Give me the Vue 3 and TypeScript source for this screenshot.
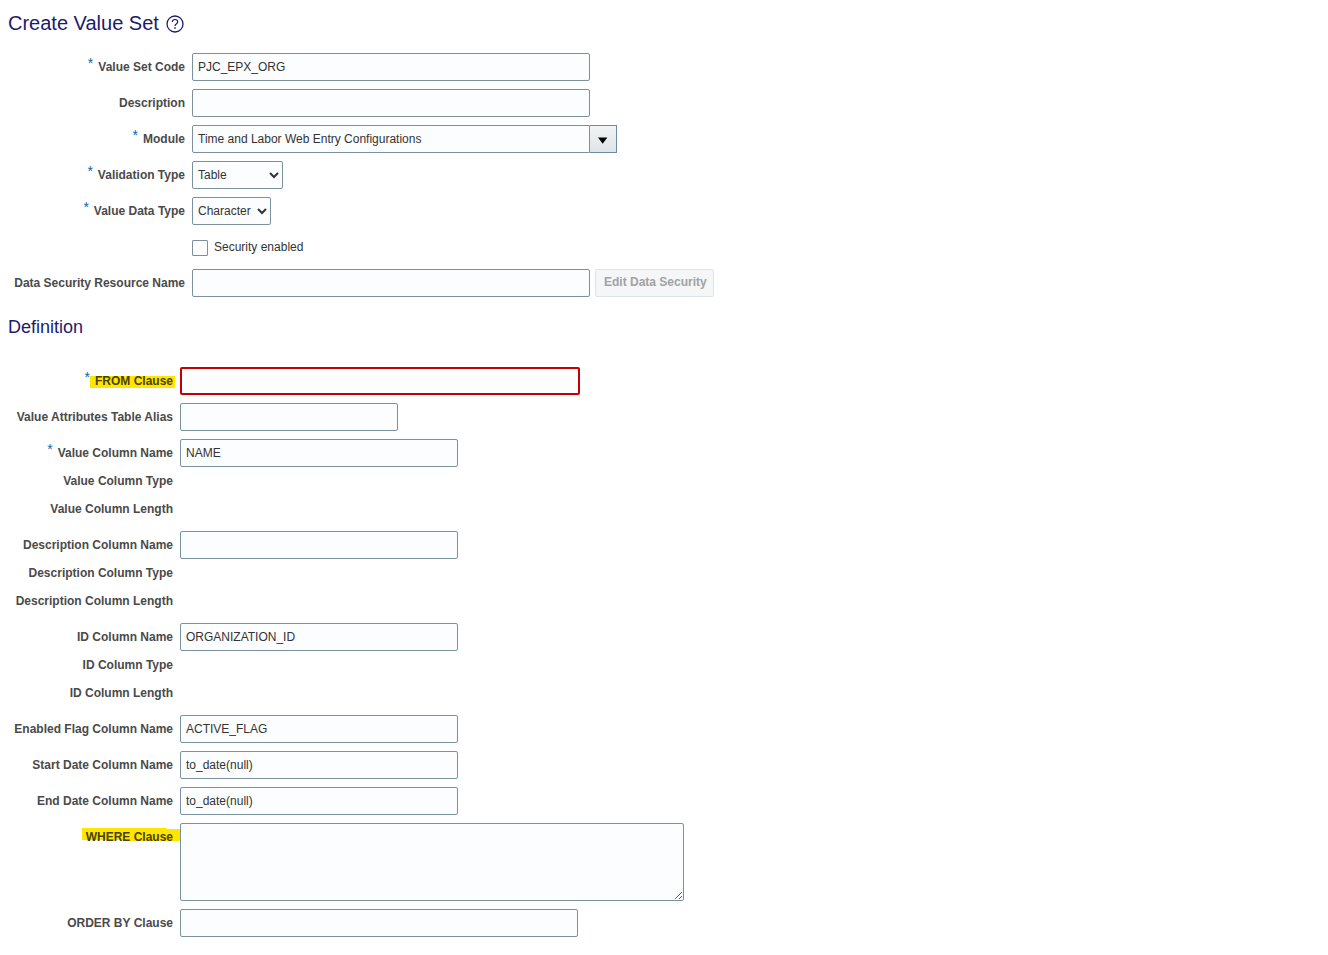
<script setup lang="ts">
import { ref } from 'vue'

type Kind = 'text' | 'combo' | 'select' | 'check' | 'readonly' | 'area'

interface Field {
  id: string
  label: string
  kind: Kind
  value?: string
  size?: 'small' | 'medium' | 'large' | 'type' | 'data'
  required?: boolean
  invalid?: boolean
  mark?: 'from' | 'where'
  action?: string
}

const general = ref<Field[]>([
  { id: 'code', label: 'Value Set Code', kind: 'text', value: 'PJC_EPX_ORG', size: 'large', required: true },
  { id: 'description', label: 'Description', kind: 'text', value: '', size: 'large' },
  { id: 'module', label: 'Module', kind: 'combo', value: 'Time and Labor Web Entry Configurations', size: 'large', required: true },
  { id: 'validation', label: 'Validation Type', kind: 'select', value: 'Table', size: 'type', required: true },
  { id: 'datatype', label: 'Value Data Type', kind: 'select', value: 'Character', size: 'data', required: true },
  { id: 'security', label: 'Security enabled', kind: 'check' },
  { id: 'resource', label: 'Data Security Resource Name', kind: 'text', value: '', size: 'large', action: 'Edit Data Security' },
])

const definition = ref<Field[]>([
  { id: 'from', label: 'FROM Clause', kind: 'text', value: '', size: 'large', required: true, invalid: true, mark: 'from' },
  { id: 'alias', label: 'Value Attributes Table Alias', kind: 'text', value: '', size: 'small' },
  { id: 'value-name', label: 'Value Column Name', kind: 'text', value: 'NAME', size: 'medium', required: true },
  { id: 'value-type', label: 'Value Column Type', kind: 'readonly' },
  { id: 'value-length', label: 'Value Column Length', kind: 'readonly' },
  { id: 'desc-name', label: 'Description Column Name', kind: 'text', value: '', size: 'medium' },
  { id: 'desc-type', label: 'Description Column Type', kind: 'readonly' },
  { id: 'desc-length', label: 'Description Column Length', kind: 'readonly' },
  { id: 'id-name', label: 'ID Column Name', kind: 'text', value: 'ORGANIZATION_ID', size: 'medium' },
  { id: 'id-type', label: 'ID Column Type', kind: 'readonly' },
  { id: 'id-length', label: 'ID Column Length', kind: 'readonly' },
  { id: 'enabled', label: 'Enabled Flag Column Name', kind: 'text', value: 'ACTIVE_FLAG', size: 'medium' },
  { id: 'start', label: 'Start Date Column Name', kind: 'text', value: 'to_date(null)', size: 'medium' },
  { id: 'end', label: 'End Date Column Name', kind: 'text', value: 'to_date(null)', size: 'medium' },
  { id: 'where', label: 'WHERE Clause', kind: 'area', value: '', mark: 'where' },
  { id: 'order', label: 'ORDER BY Clause', kind: 'text', value: '', size: 'large' },
])

const sections = [
  { id: 'general', fields: general },
  { id: 'definition', title: 'Definition', fields: definition },
]
const secured = ref(false)
</script>

<template>
  <main class="page">
    <header class="title">
      <h1>Create Value Set</h1>
      <button type="button" class="help" aria-label="Help">
        <svg width="18" height="18" viewBox="0 0 18 18" fill="none" stroke="currentColor">
          <circle cx="9" cy="9" r="8" stroke-width="1.3" />
          <path d="M6.3 7.1C6.3 5.4 7.4 4.5 9 4.5s2.7.9 2.7 2.3c0 1-.6 1.6-1.4 2.1C9.4 9.4 9 9.8 9 11" stroke-width="1.2" />
          <path d="M9 12.3v1.5" stroke-width="1.5" />
        </svg>
      </button>
    </header>

    <form @submit.prevent>
      <section v-for="section in sections" :key="section.id" :class="['section', section.id]">
        <h2 v-if="section.title">{{ section.title }}</h2>
        <div v-for="f in section.fields.value" :key="f.id" :class="['row', f.kind]">
          <div class="caption">
            <template v-if="f.kind !== 'check'">
              <span v-if="f.required" class="star" aria-hidden="true">*</span>
              <span v-if="f.kind === 'readonly'" class="name">{{ f.label }}</span>
              <label v-else :for="f.id" :class="['name', f.mark && 'mark-' + f.mark]">{{ f.label }}</label>
            </template>
          </div>
          <div class="control">
            <input
              v-if="f.kind === 'text' || f.kind === 'combo'"
              :id="f.id"
              v-model="f.value"
              type="text"
              :class="['box', f.size, { invalid: f.invalid }]"
              :required="f.required"
              spellcheck="false"
            />
            <button v-if="f.kind === 'combo'" type="button" class="drop" aria-label="Open module list">
              <svg width="10" height="7" viewBox="0 0 10 7"><path d="M0 0.5h9.4L4.7 6.8z" fill="#000" /></svg>
            </button>
            <select v-if="f.kind === 'select'" :id="f.id" v-model="f.value" :class="['box', f.size]">
              <option>{{ f.value }}</option>
            </select>
            <label v-if="f.kind === 'check'" class="tick">
              <input v-model="secured" type="checkbox" />
              <span>{{ f.label }}</span>
            </label>
            <textarea v-if="f.kind === 'area'" :id="f.id" v-model="f.value" class="box" spellcheck="false"></textarea>
            <button v-if="f.action" type="button" class="action" disabled>{{ f.action }}</button>
          </div>
        </div>
      </section>
    </form>
  </main>
</template>

<style>
body {
  margin: 0;
  background: #fff;
}
</style>

<style scoped>
.page {
  padding: 8px 8px 18px;
  font-family: "Liberation Sans", Arial, sans-serif;
  font-size: 12px;
  color: #333;
}
.title {
  display: flex;
  align-items: center;
  gap: 7px;
  height: 30px;
  margin-bottom: 15px;
  color: #1b1b6f;
}
h1,
h2 {
  margin: 0;
  font-weight: 400;
  color: #1b1b6f;
}
h1 {
  font-size: 20px;
  line-height: 30px;
}
h2 {
  font-size: 18px;
  line-height: 24px;
  margin: 18px 0 28px;
}
.help {
  display: flex;
  padding: 2px 0 0;
  border: 0;
  background: none;
  color: inherit;
}
.row {
  display: grid;
  grid-template-columns: 165px minmax(0, 1fr);
  column-gap: 7px;
  min-height: 28px;
  margin-top: 8px;
}
.general .row {
  grid-template-columns: 177px minmax(0, 1fr);
}
.row.readonly {
  margin-top: 0;
}
.caption {
  display: flex;
  justify-content: flex-end;
  padding-top: 4px;
  line-height: 20px;
  white-space: nowrap;
}
.name {
  height: 20px;
  font-weight: 700;
  color: #4a4a4a;
}
.star {
  margin-right: 5px;
  font-size: 14px;
  line-height: 12px;
  color: #0b66ad;
}
.mark-from {
  margin: 0 -2px 0 -5px;
  padding: 0 2px 0 5px;
  color: #4a4200;
  background: linear-gradient(#ffe600, #ffe600) 0 5px / 100% 12px no-repeat;
}
.mark-where {
  margin-right: -7px;
  padding: 0 7px 0 4px;
  color: #4a4200;
  background:
    linear-gradient(#ffe600, #ffe600) 0 1px / 85px 12px no-repeat,
    linear-gradient(#ffe600, #ffe600) 100% 2px / 50px 12px no-repeat;
}
.control {
  display: flex;
  align-items: flex-start;
}
.box {
  box-sizing: border-box;
  height: 28px;
  max-width: 100%;
  margin: 0;
  padding: 0 5px;
  border: 1px solid #7b919f;
  border-radius: 2px;
  background-color: #fcfdfe;
  color: #333;
  font: inherit;
}
.small {
  width: 218px;
}
.medium {
  width: 278px;
}
.large {
  width: 398px;
}
select.box {
  padding: 0 1px;
}
.type {
  width: 91px;
}
.data {
  width: 79px;
}
.box.invalid {
  width: 400px;
  border: 2px solid #c40000;
  box-shadow: none;
}
textarea.box {
  width: 504px;
  height: 78px;
  padding: 5px;
  resize: both;
}
.combo .box {
  border-radius: 2px 0 0 2px;
}
.drop {
  display: flex;
  align-items: center;
  justify-content: center;
  box-sizing: border-box;
  width: 27px;
  height: 28px;
  padding: 2px 1px 0 0;
  border: 1px solid #6e8aa3;
  border-left: 0;
  background: linear-gradient(#f2f4f5, #dfe4e7);
}
.tick {
  display: flex;
  align-items: center;
  gap: 6px;
  height: 28px;
  line-height: 28px;
}
.tick input {
  appearance: none;
  box-sizing: border-box;
  width: 16px;
  height: 16px;
  margin: 2px 0 0;
  border: 1px solid #7b919f;
  border-radius: 1px;
  background: #fff;
}
.tick input:checked {
  background: #0572ce;
}
.action {
  height: 28px;
  margin-left: 5px;
  padding: 0 6px 2px 8px;
  border: 1px solid #dfe4e7;
  border-radius: 2px;
  background: #f4f6f7;
  color: #a0a2a4;
  font: inherit;
  font-weight: 700;
  white-space: nowrap;
}
</style>
